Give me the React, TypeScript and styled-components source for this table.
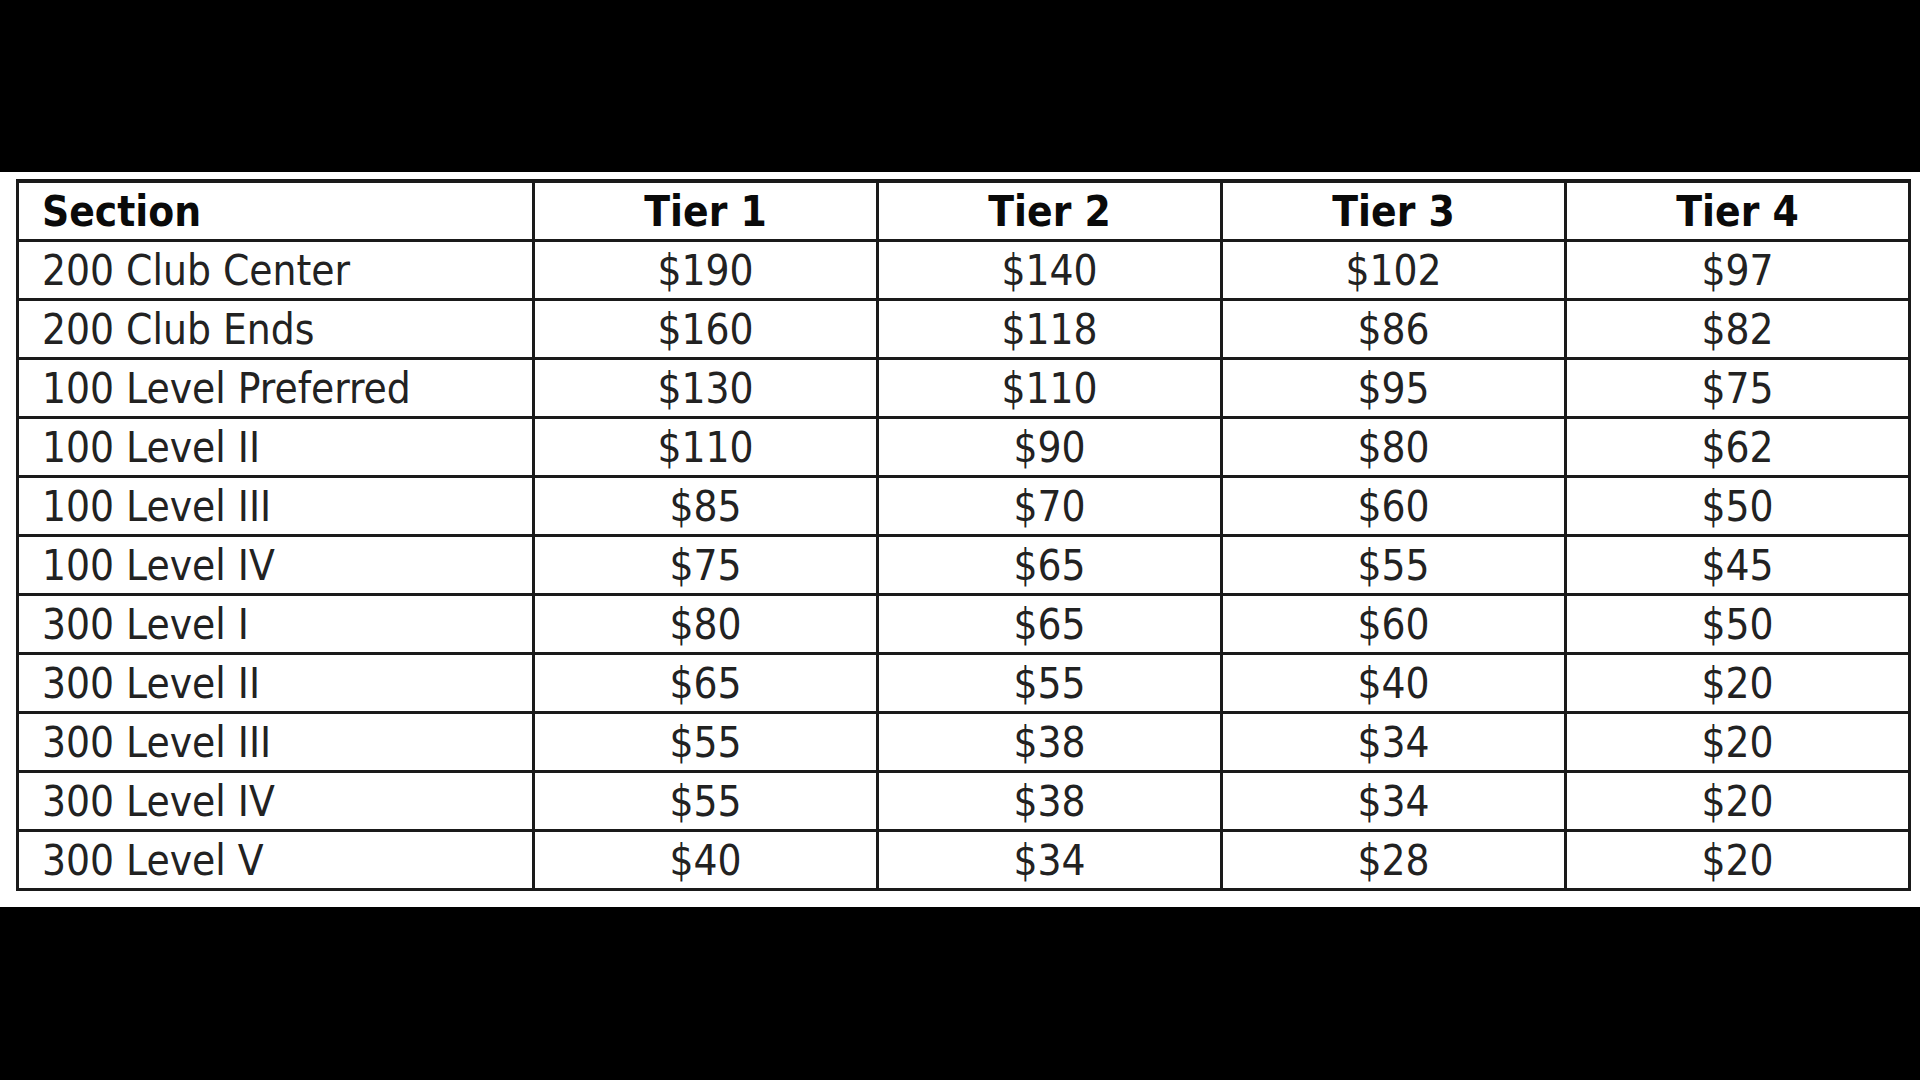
import styled, { createGlobalStyle } from 'styled-components';

interface PriceRow {
  section: string;
  prices: string[];
}

const tiers = ['Tier 1', 'Tier 2', 'Tier 3', 'Tier 4'];

const rows: PriceRow[] = [
  { section: '200 Club Center', prices: ['$190', '$140', '$102', '$97'] },
  { section: '200 Club Ends', prices: ['$160', '$118', '$86', '$82'] },
  { section: '100 Level Preferred', prices: ['$130', '$110', '$95', '$75'] },
  { section: '100 Level II', prices: ['$110', '$90', '$80', '$62'] },
  { section: '100 Level III', prices: ['$85', '$70', '$60', '$50'] },
  { section: '100 Level IV', prices: ['$75', '$65', '$55', '$45'] },
  { section: '300 Level I', prices: ['$80', '$65', '$60', '$50'] },
  { section: '300 Level II', prices: ['$65', '$55', '$40', '$20'] },
  { section: '300 Level III', prices: ['$55', '$38', '$34', '$20'] },
  { section: '300 Level IV', prices: ['$55', '$38', '$34', '$20'] },
  { section: '300 Level V', prices: ['$40', '$34', '$28', '$20'] },
];

// price table screenshot, black letterbox above and below
const App = () => {
  return (
    <>
      <GlobalStyle />
      <Page>
        <Band>
          <PriceTable>
            <colgroup>
              <col style={{ width: 516 }} />
              {tiers.map((t) => (
                <col key={t} style={{ width: 344 }} />
              ))}
            </colgroup>
            <thead>
              <tr>
                <HeadCell $align="left">Section</HeadCell>
                {tiers.map((t) => (
                  <HeadCell key={t} $align="center">
                    {t}
                  </HeadCell>
                ))}
              </tr>
            </thead>
            <tbody>
              {rows.map((r) => (
                <tr key={r.section}>
                  <Cell $align="left">{r.section}</Cell>
                  {r.prices.map((p, i) => (
                    <Cell key={i} $align="center">
                      {p}
                    </Cell>
                  ))}
                </tr>
              ))}
            </tbody>
          </PriceTable>
        </Band>
      </Page>
    </>
  );
};

export default App;

const GlobalStyle = createGlobalStyle`
  html, body {
    margin: 0;
    padding: 0;
    background: #000;
  }
`;

const Page = styled.div`
  display: flex;
  flex-direction: column;
  justify-content: flex-start;
  width: 1920px;
  height: 1080px;
  padding-top: 172px;
  box-sizing: border-box;
  background: #000;
`;

const Band = styled.div`
  display: flex;
  height: 735px;
  padding: 7px 10px 0 16px;
  box-sizing: border-box;
  background: #fff;
`;

const PriceTable = styled.table`
  width: 1892px;
  height: 711px;
  border-collapse: collapse;
  table-layout: fixed;
  font-family: 'DejaVu Sans Condensed', 'DejaVu Sans', sans-serif;
  font-stretch: condensed;
  font-size: 42px;

  tr {
    height: 59px;
  }
`;

const HeadCell = styled.th<{ $align: 'left' | 'center' }>`
  border: 3px solid #1a1a1a;
  border-top-width: 4px;
  padding: 3px 0 0 ${(p) => (p.$align === 'left' ? '23px' : '0')};
  text-align: ${(p) => p.$align};
  vertical-align: middle;
  font-weight: 700;
  color: #0a0a0a;
  line-height: 1;
`;

const Cell = styled.td<{ $align: 'left' | 'center' }>`
  border: 3px solid #1a1a1a;
  padding: 2px 0 0 ${(p) => (p.$align === 'left' ? '23px' : '0')};
  text-align: ${(p) => p.$align};
  vertical-align: middle;
  color: #222;
  line-height: 1;
`;
